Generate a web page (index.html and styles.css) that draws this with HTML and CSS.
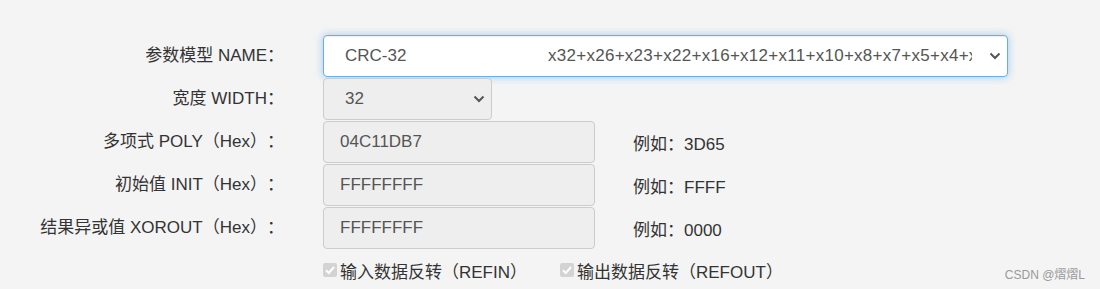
FILE: index.html
```html
<!DOCTYPE html>
<html lang="zh-CN">
<head>
<meta charset="utf-8">
<title>CRC 参数</title>
<link rel="stylesheet" href="styles.css">
</head>
<body>
<form class="crc-form">
  <div class="row">
    <label class="label">参数模型 NAME：</label>
    <div class="select select-name">
      <span class="opt-name">CRC-32</span>
      <span class="opt-poly">x32+x26+x23+x22+x16+x12+x11+x10+x8+x7+x5+x4+x2+x+1</span>
      <svg class="chev" width="12" height="8" viewBox="0 0 12 8"><path d="M1.5 1.5 L6 6 L10.5 1.5" fill="none" stroke="#555" stroke-width="2"/></svg>
    </div>
  </div>
  <div class="row">
    <label class="label">宽度 WIDTH：</label>
    <div class="select select-width">
      <span class="opt-val">32</span>
      <svg class="chev" width="12" height="8" viewBox="0 0 12 8"><path d="M1.5 1.5 L6 6 L10.5 1.5" fill="none" stroke="#555" stroke-width="2"/></svg>
    </div>
  </div>
  <div class="row">
    <label class="label">多项式 POLY（Hex）：</label>
    <input class="field" type="text" value="04C11DB7" readonly>
    <span class="hint">例如：3D65</span>
  </div>
  <div class="row">
    <label class="label">初始值 INIT（Hex）：</label>
    <input class="field" type="text" value="FFFFFFFF" readonly>
    <span class="hint">例如：FFFF</span>
  </div>
  <div class="row">
    <label class="label">结果异或值 XOROUT（Hex）：</label>
    <input class="field" type="text" value="FFFFFFFF" readonly>
    <span class="hint">例如：0000</span>
  </div>
  <div class="checks">
    <label class="check"><span class="box"><svg width="14" height="14" viewBox="0 0 14 14"><path d="M3 7.2 L5.8 10 L11 4" fill="none" stroke="#fff" stroke-width="2"/></svg></span>输入数据反转（REFIN）</label>
    <label class="check check-out"><span class="box"><svg width="14" height="14" viewBox="0 0 14 14"><path d="M3 7.2 L5.8 10 L11 4" fill="none" stroke="#fff" stroke-width="2"/></svg></span>输出数据反转（REFOUT）</label>
    <span class="watermark">CSDN @熠熠L</span>
  </div>
</form>
</body>
</html>
```

FILE: styles.css
```css
html, body {
  margin: 0;
  padding: 0;
  background: #f4f4f4;
}
body {
  font-family: "Liberation Sans", "Noto Sans CJK SC", sans-serif;
  font-size: 17px;
  color: #333;
  width: 1100px;
  height: 289px;
  overflow: hidden;
  text-spacing-trim: space-all;
}
.crc-form {
  padding-top: 35px;
  display: flex;
  flex-direction: column;
  gap: 1px;
}
.row {
  display: flex;
  align-items: center;
  height: 42px;
}
.label {
  width: 284px;
  text-align: right;
  margin-right: 39px;
  line-height: 24px;
  white-space: nowrap;
}
.select {
  box-sizing: border-box;
  height: 42px;
  border-radius: 4px;
  display: flex;
  align-items: center;
  color: #555;
  white-space: nowrap;
}
.select-name {
  width: 685px;
  background: #fff;
  border: 1px solid #66afe9;
  box-shadow: inset 0 1px 1px rgba(0,0,0,.075), 0 0 8px rgba(102,175,233,.6);
  padding: 0 6px 0 21px;
}
.opt-name {
  width: 203px;
  flex: none;
}
.opt-poly {
  width: 424px;
  flex: none;
  overflow: hidden;
  letter-spacing: 0.27px;
}
.chev {
  flex: none;
  margin-left: auto;
}
.select-width {
  width: 169px;
  background: #eee;
  border: 1px solid #ccc;
  padding: 0 6px 0 21px;
}
.field {
  box-sizing: border-box;
  width: 272px;
  height: 42px;
  margin: 0;
  padding: 0 16px;
  border: 1px solid #ccc;
  border-radius: 4px;
  background: #eee;
  color: #555;
  font: inherit;
  outline: none;
}
.hint {
  margin-left: 38px;
  color: #333;
}
.checks {
  display: flex;
  align-items: center;
  height: 26px;
  margin-top: 7px;
  padding-left: 323px;
}
.check {
  display: flex;
  align-items: center;
  color: #333;
  white-space: nowrap;
}
.check-out {
  margin-left: 33px;
}
.box {
  width: 14px;
  height: 14px;
  border-radius: 2px;
  background: #d3d3d3;
  margin-right: 3px;
  display: flex;
}
.watermark {
  margin-left: auto;
  margin-right: 15px;
  font-size: 12px;
  color: #9a9a9a;
  margin-top: 6px;
}
```
